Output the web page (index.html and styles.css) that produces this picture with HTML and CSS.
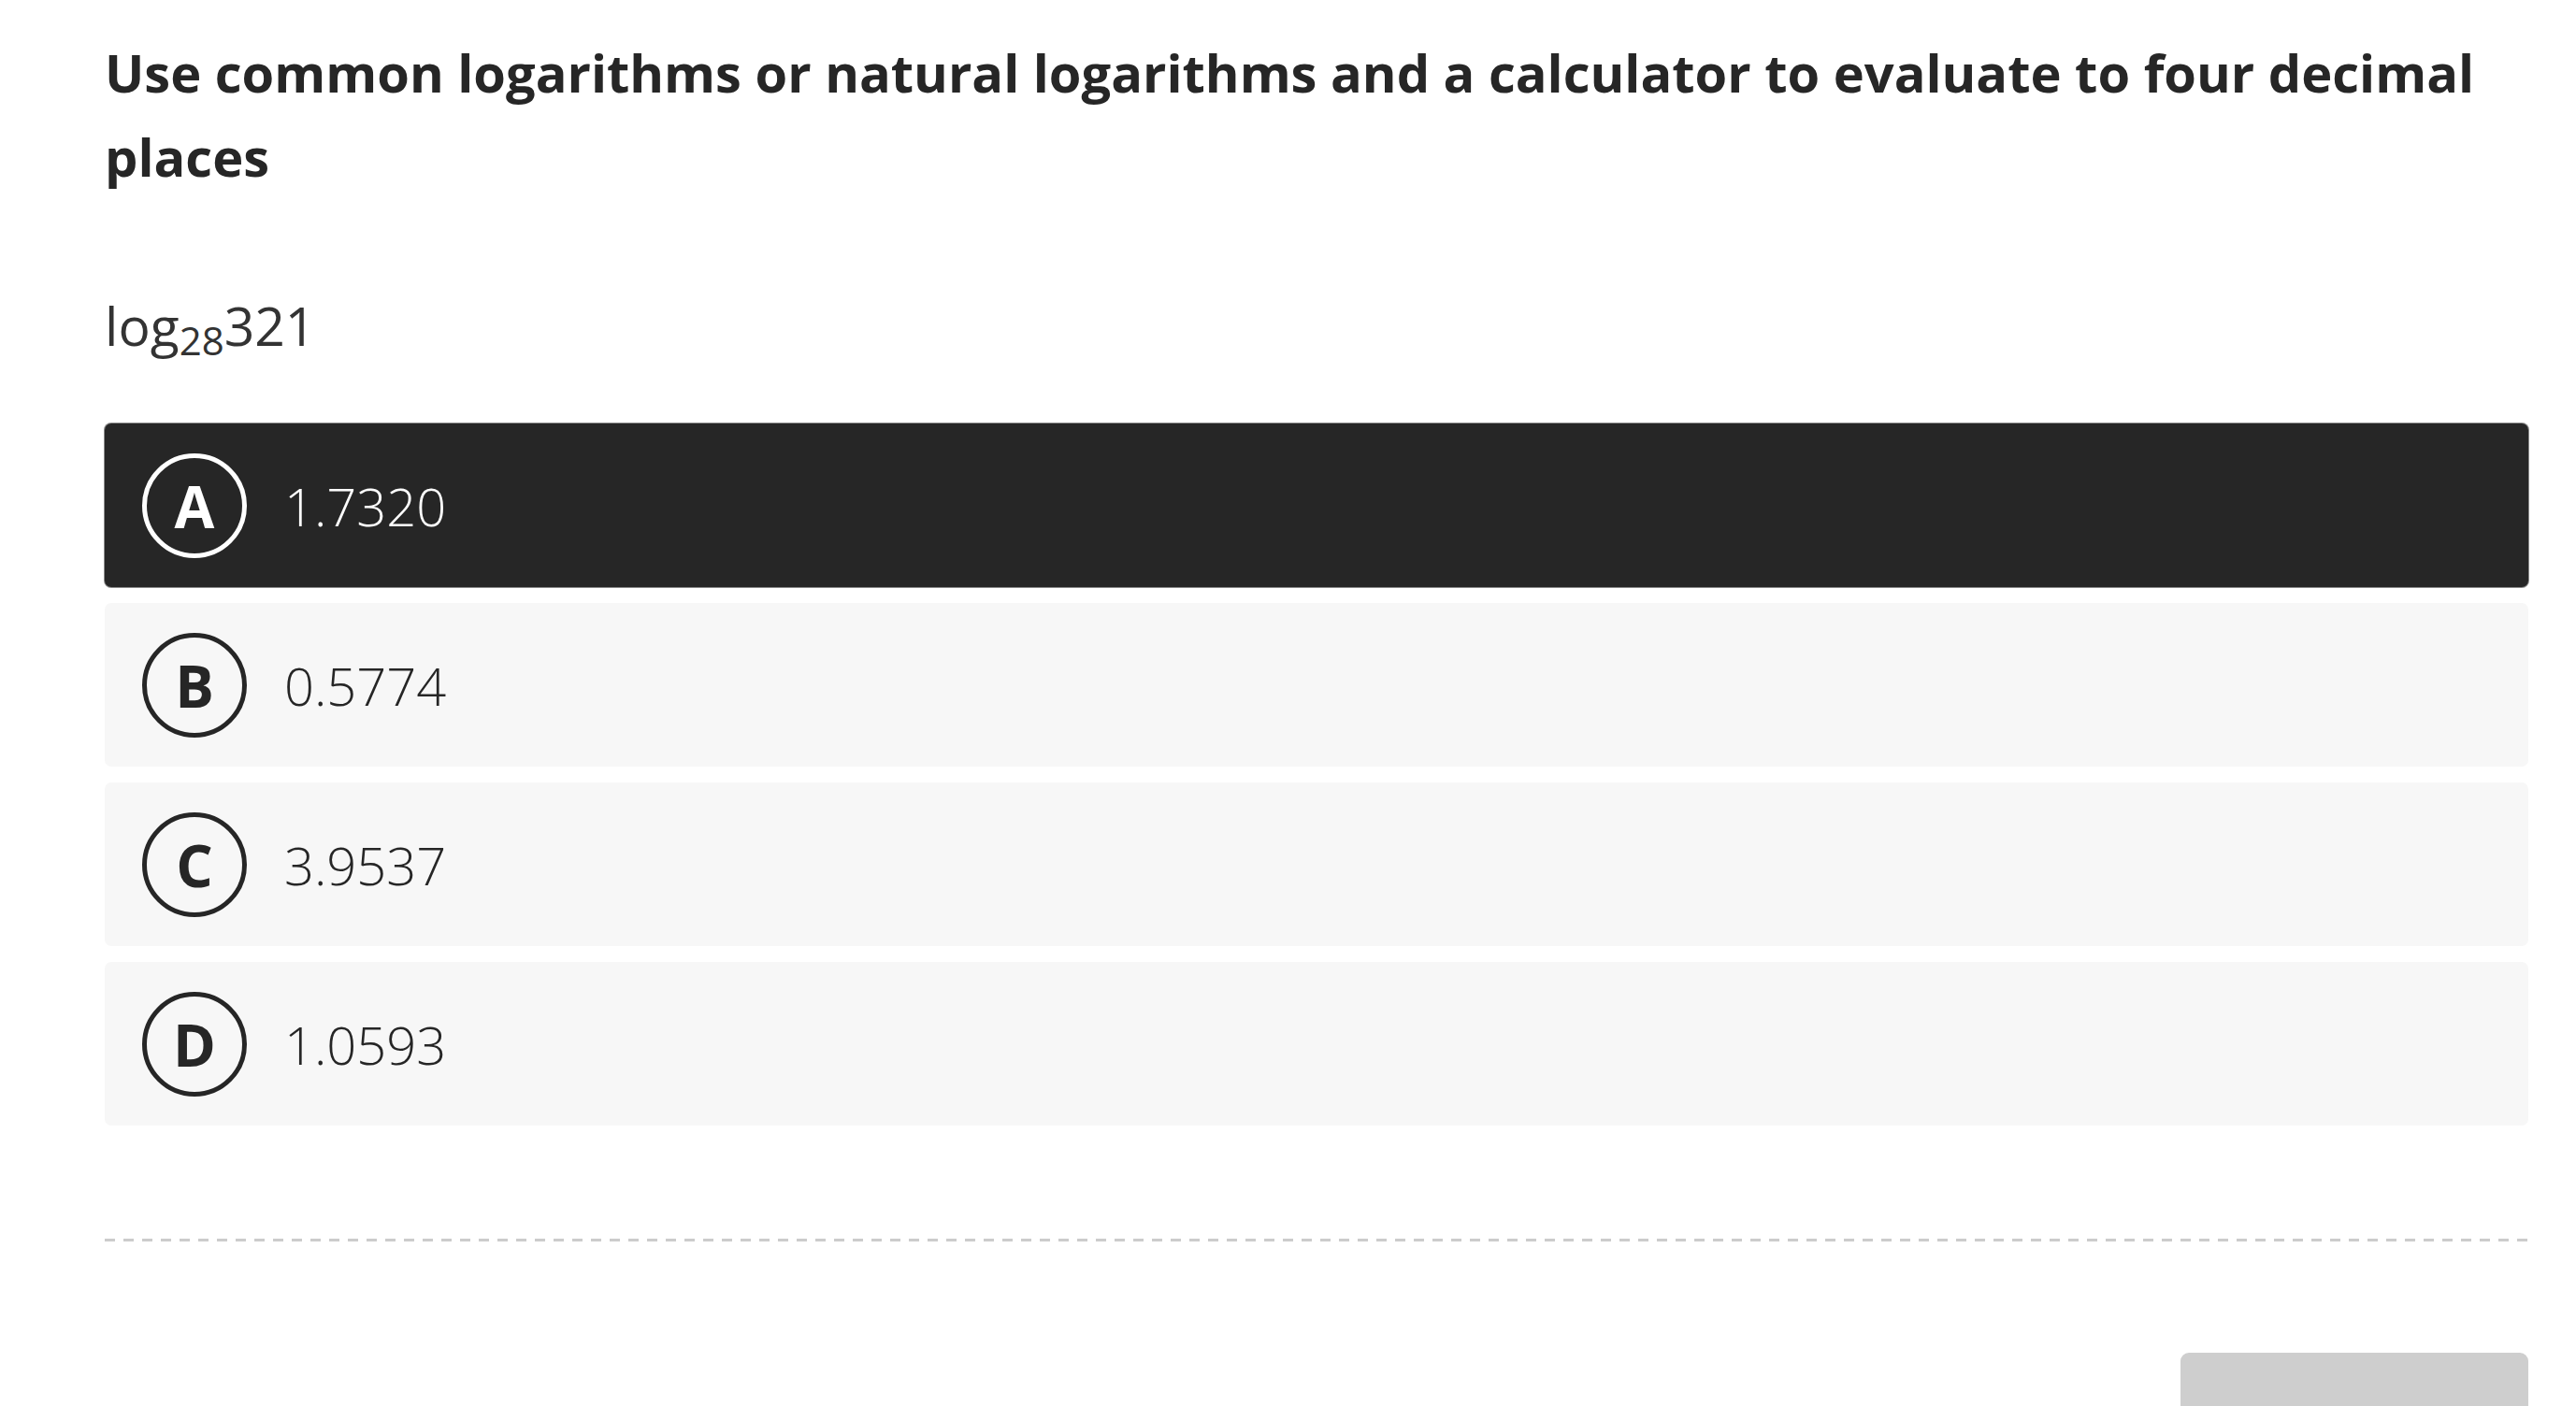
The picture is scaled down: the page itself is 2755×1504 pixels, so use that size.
FILE: index.html
```html
<!DOCTYPE html>
<html>
<head>
<meta charset="utf-8">
<link rel="stylesheet" href="styles.css">
</head>
<body>
<main class="quiz">
  <h1 class="question">Use common logarithms or natural logarithms and a calculator to evaluate to four decimal places</h1>
  <p class="expr">log<sub>28</sub>321</p>
  <div class="options">
    <div class="option selected"><span class="badge">A</span><span class="value">1.7320</span></div>
    <div class="option"><span class="badge">B</span><span class="value">0.5774</span></div>
    <div class="option"><span class="badge">C</span><span class="value">3.9537</span></div>
    <div class="option"><span class="badge">D</span><span class="value">1.0593</span></div>
  </div>
  <div class="divider"></div>
  <div class="actions"><button class="submit" type="button"></button></div>
</main>
</body>
</html>
```

FILE: styles.css
```css
html, body {
  margin: 0;
  padding: 0;
  background: #ffffff;
}
body {
  font-family: "Open Sans", "Noto Sans", sans-serif;
  color: #262626;
}
.quiz {
  padding: 32px 51px 0 112px;
}
.question {
  margin: 0;
  font-size: 56px;
  line-height: 90px;
  font-weight: 700;
  color: #262626;
}
.expr {
  margin: 98px 0 0 0;
  font-size: 57px;
  line-height: 76px;
  font-weight: 400;
  color: #333333;
}
.expr sub {
  font-size: 42px;
  vertical-align: -10px;
  line-height: 0;
}
.options {
  margin-top: 67px;
  display: flex;
  flex-direction: column;
  gap: 17px;
}
.option {
  height: 175px;
  box-sizing: border-box;
  border-radius: 7px;
  background: #f7f7f7;
  display: flex;
  align-items: center;
  padding-left: 40px;
  color: #262626;
}
.option.selected {
  background: #262626;
  color: #ffffff;
  box-shadow: 0 0 0 1px #8a8a8a;
}
.badge {
  width: 112px;
  height: 112px;
  box-sizing: border-box;
  border: 5px solid currentColor;
  border-radius: 50%;
  display: flex;
  align-items: center;
  justify-content: center;
  font-size: 62px;
  font-weight: 700;
  line-height: 1;
  flex: none;
}
.value {
  margin-left: 40px;
  font-size: 56px;
  font-weight: 350;
  line-height: 1;
}
.divider {
  margin-top: 121px;
  height: 3px;
  background: repeating-linear-gradient(to right, #cccccc 0 11px, transparent 11px 20px);
}
.actions {
  margin-top: 119px;
  display: flex;
  justify-content: flex-end;
}
.submit {
  width: 372px;
  height: 120px;
  border: none;
  border-radius: 9px;
  background: #cecece;
}
```
